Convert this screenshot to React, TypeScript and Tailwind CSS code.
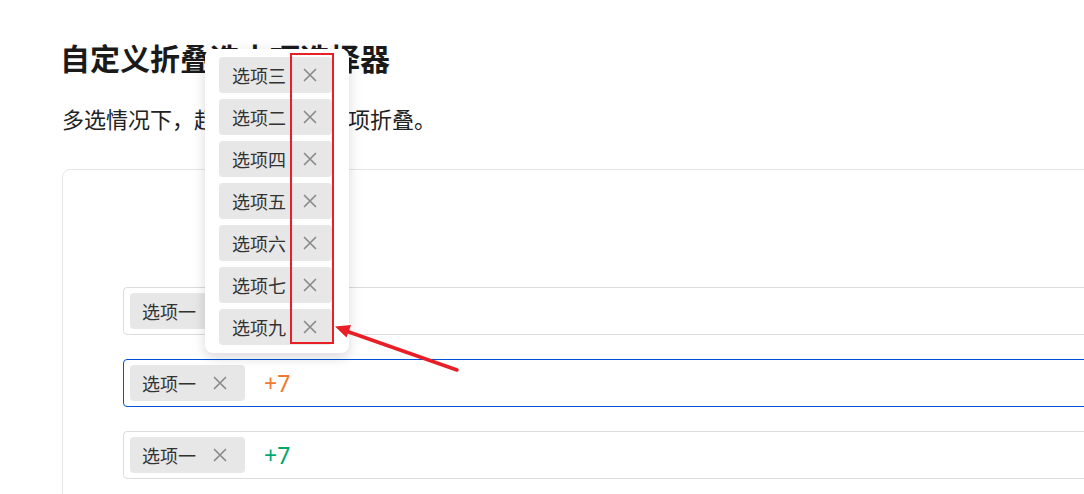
import React from "react";

const CloseIcon = () => (
  <svg width="14" height="14" viewBox="0 0 14 14" className="shrink-0">
    <path d="M1.5 1.5 L12.5 12.5 M12.5 1.5 L1.5 12.5" stroke="#8b8b8b" strokeWidth="1.7" strokeLinecap="round" fill="none" />
  </svg>
);

const InputTag = () => (
  <div className="flex h-[36px] items-center rounded-[4px] bg-[#e7e7e7] pl-[12px] pr-[18px] text-[18px] text-[#333]">
    <span className="leading-none">选项一</span>
    <span className="ml-[17px] flex"><CloseIcon /></span>
  </div>
);

const PopTag = ({ label }: { label: string }) => (
  <div className="flex h-[36px] w-[113px] items-center rounded-[4px] bg-[#e7e7e7] pl-[13px] text-[18px] text-[#333]">
    <span className="leading-none">{label}</span>
    <span className="ml-[17px] flex"><CloseIcon /></span>
  </div>
);

const SelectBox = ({ color, focused }: { color: string; focused?: boolean }) => (
  <div
    className={
      focused
        ? "flex h-[48px] w-[1000px] items-center rounded-[4px] border border-[#0052d9] px-[6px]"
        : "flex h-[48px] w-[1000px] items-center rounded-[4px] border border-[#dcdcdc] px-[6px]"
    }
  >
    <InputTag />
    <span className={`ml-[19px] text-[23px] leading-none ${color}`} style={{ fontFamily: '"Noto Sans", "Liberation Sans", sans-serif' }}>
      +7
    </span>
  </div>
);

export default function App() {
  const items = ["选项三", "选项二", "选项四", "选项五", "选项六", "选项七", "选项九"];
  return (
    <div
      className="relative h-[494px] w-[1084px] overflow-hidden bg-white"
      style={{ fontFamily: '"Noto Sans CJK SC", "Noto Sans", sans-serif' }}
    >
      <div className="pl-[62px] pt-[37px]">
        <h1 className="-ml-[2px] whitespace-nowrap text-[30px] font-bold leading-[40px] text-[#1a1a1a]">自定义折叠选中项选择器</h1>
        <p className="mt-[25px] whitespace-nowrap text-[22px] leading-[32px] text-[#222]">多选情况下，超出限制的选中项折叠。</p>
        <div className="mt-[35px] h-[400px] w-[1100px] rounded-[8px] border border-[#e7e7e7] pl-[60px] pt-[117px]">
          <div className="flex flex-col gap-[24px]">
            <SelectBox color="text-[#999]" />
            <SelectBox color="text-[#ed7b2f]" focused />
            <SelectBox color="text-[#00a870]" />
          </div>
        </div>
      </div>

      {/* popover */}
      <div className="absolute left-[205px] top-[49px] flex w-[144px] flex-col gap-[6px] rounded-[8px] bg-white pb-[8px] pl-[14px] pt-[8px] shadow-[0_3px_14px_2px_rgba(0,0,0,0.08),0_6px_10px_0_rgba(0,0,0,0.06)]">
        {items.map((t) => (
          <PopTag key={t} label={t} />
        ))}
      </div>

      {/* annotation rectangle */}
      <div className="absolute left-[290px] top-[53px] h-[291px] w-[44px] border-2 border-[#e81f27]" />

      {/* annotation arrow */}
      <svg className="pointer-events-none absolute left-0 top-0" width="1084" height="494" viewBox="0 0 1084 494">
        <line x1="457" y1="370" x2="346" y2="331" stroke="#e81f27" strokeWidth="3.5" strokeLinecap="round" />
        <polygon points="335,326.5 351,325 346.5,337.5" fill="#e81f27" />
      </svg>
    </div>
  );
}
